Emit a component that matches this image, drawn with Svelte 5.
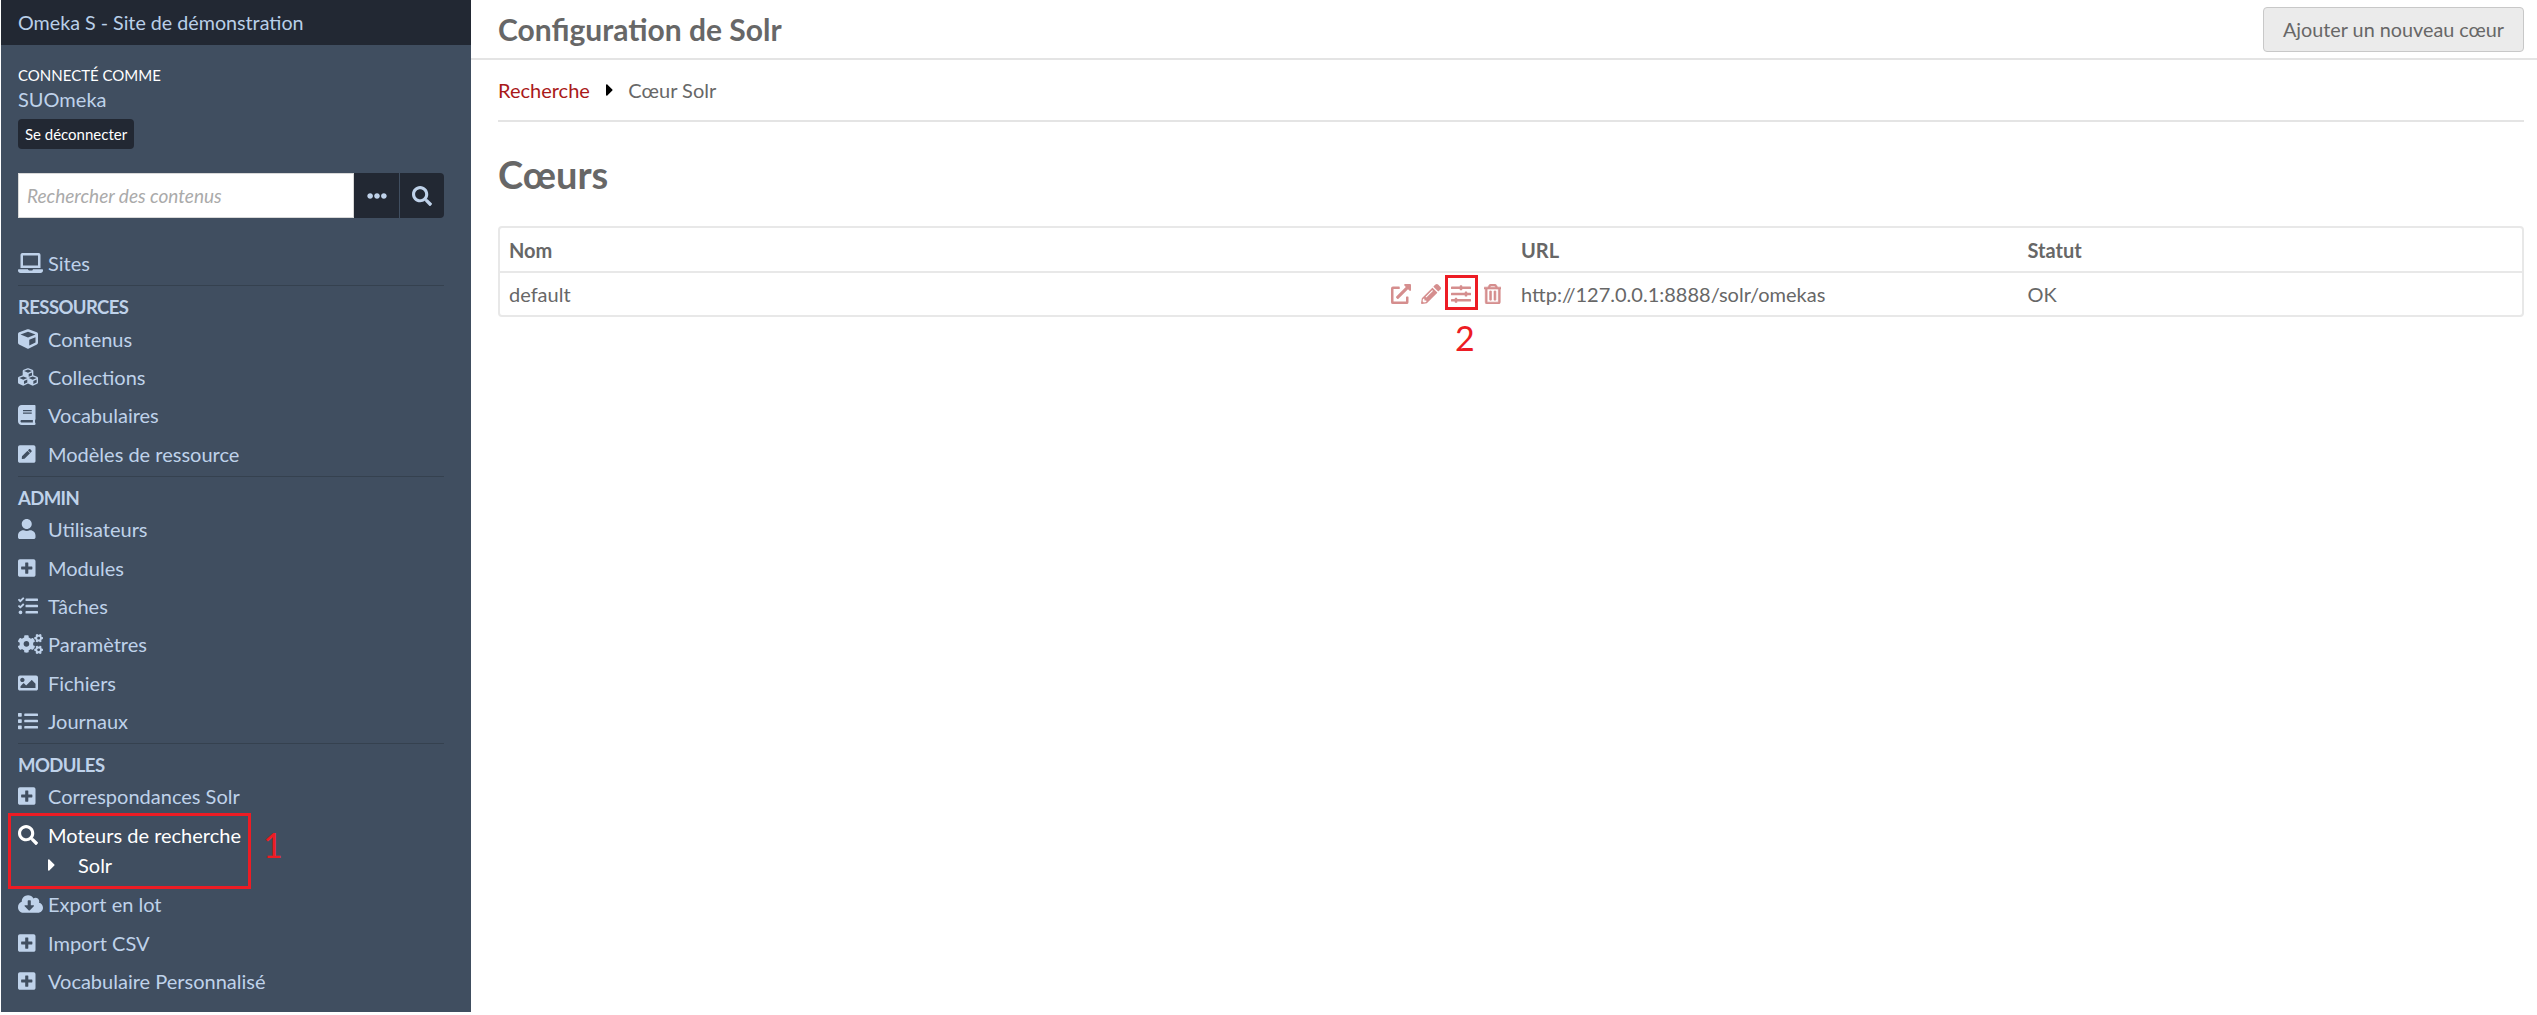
<script lang="ts">
  // icon paths, viewBox width / path
  const icons = {
    laptop: [640, 'M624 416H381.54c-.74 19.81-14.71 32-32.74 32H288c-18.69 0-33.02-17.47-32.77-32H16c-8.8 0-16 7.2-16 16v16c0 35.2 28.8 64 64 64h512c35.2 0 64-28.8 64-64v-16c0-8.8-7.2-16-16-16zM576 48c0-26.4-21.6-48-48-48H112C85.6 0 64 21.6 64 48v336h512V48zm-64 272H128V64h384v256z'],
    cube: [512, 'M239.1 6.3l-208 78c-18.7 7-31.1 25-31.1 45v225.1c0 18.2 10.3 34.8 26.5 42.9l208 104c13.5 6.8 29.4 6.8 42.9 0l208-104c16.3-8.1 26.5-24.8 26.5-42.9V129.3c0-20-12.4-37.9-31.1-44.9l-208-78C262 2.2 250 2.2 239.1 6.3zM256 68.4l192 72v1.1l-192 78-192-78v-1.1l192-72zm32 356V275.5l160-65v133.9l-160 80z'],
    cubes: [576, 'M488.6 250.2L392 214V105.5c0-15-9.3-28.4-23.4-33.7l-100-37.5c-8.1-3.1-17.1-3.1-25.3 0l-100 37.5c-14.1 5.3-23.4 18.7-23.4 33.7V214l-96.6 36.2C9.3 255.5 0 268.9 0 283.9V394c0 13.6 7.7 26.1 19.9 32.2l100 50c10.1 5.1 22.1 5.1 32.2 0l103.9-52 103.9 52c10.1 5.1 22.1 5.1 32.2 0l100-50c12.2-6.1 19.9-18.6 19.9-32.2V283.9c0-15-9.3-28.4-23.4-33.7zM358 214.8l-85 31.9v-68.2l85-37v73.3zM154 104.1l102-38.2 102 38.2v.6l-102 41.4-102-41.4v-.6zm84 291.1l-85 42.5v-79.1l85-38.8v75.4zm0-112l-102 41.4-102-41.4v-.6l102-38.2 102 38.2v.6zm240 112l-85 42.5v-79.1l85-38.8v75.4zm0-112l-102 41.4-102-41.4v-.6l102-38.2 102 38.2v.6z'],
    book: [448, 'M448 360V24c0-13.3-10.7-24-24-24H96C43 0 0 43 0 96v320c0 53 43 96 96 96h328c13.3 0 24-10.7 24-24v-16c0-7.5-3.5-14.3-8.9-18.7-4.2-15.4-4.2-59.3 0-74.7 5.4-4.3 8.9-11.1 8.9-18.6zM128 134c0-3.3 2.7-6 6-6h212c3.3 0 6 2.7 6 6v20c0 3.3-2.7 6-6 6H134c-3.3 0-6-2.7-6-6v-20zm0 64c0-3.3 2.7-6 6-6h212c3.3 0 6 2.7 6 6v20c0 3.3-2.7 6-6 6H134c-3.3 0-6-2.7-6-6v-20zm253.4 250H96c-17.7 0-32-14.3-32-32 0-17.6 14.4-32 32-32h285.4c-1.9 17.1-1.9 46.9 0 64z'],
    penSquare: [448, 'M400 480H48c-26.5 0-48-21.5-48-48V80c0-26.5 21.5-48 48-48h352c26.5 0 48 21.5 48 48v352c0 26.5-21.5 48-48 48zM238.1 177.9L102.4 313.6l-6.3 57.1c-.8 7.6 5.6 14.1 13.3 13.3l57.1-6.3L302.2 242c2.3-2.3 2.3-6.1 0-8.5L246.7 178c-2.5-2.4-6.3-2.4-8.6-.1zM345 165.1L314.9 135c-9.4-9.4-24.6-9.4-33.9 0l-23.1 23.1c-2.3 2.3-2.3 6.1 0 8.5l55.5 55.5c2.3 2.3 6.1 2.3 8.5 0L345 199c9.3-9.3 9.3-24.5 0-33.9z'],
    user: [448, 'M224 256c70.7 0 128-57.3 128-128S294.7 0 224 0 96 57.3 96 128s57.3 128 128 128zm89.6 32h-16.7c-22.2 10.2-46.9 16-72.9 16s-50.6-5.8-72.9-16h-16.7C60.2 288 0 348.2 0 422.4V464c0 26.5 21.5 48 48 48h352c26.5 0 48-21.5 48-48v-41.6c0-74.2-60.2-134.4-134.4-134.4z'],
    plus: [448, 'M400 32H48C21.5 32 0 53.5 0 80v352c0 26.5 21.5 48 48 48h352c26.5 0 48-21.5 48-48V80c0-26.5-21.5-48-48-48zm-32 252c0 6.6-5.4 12-12 12h-92v92c0 6.6-5.4 12-12 12h-56c-6.6 0-12-5.4-12-12v-92H92c-6.6 0-12-5.4-12-12v-56c0-6.6 5.4-12 12-12h92v-92c0-6.6 5.4-12 12-12h56c6.6 0 12 5.4 12 12v92h92c6.6 0 12 5.4 12 12v56z'],
    tasks: [512, 'M139.61 35.5a12 12 0 0 0-17 0L58.93 98.81l-22.7-22.12a12 12 0 0 0-17 0L3.53 92.41a12 12 0 0 0 0 17l47.59 47.4a12.78 12.78 0 0 0 17.61 0l15.59-15.62L156.52 69a12.09 12.09 0 0 0 .09-17zm0 159.19a12 12 0 0 0-17 0l-63.68 63.72-22.7-22.1a12 12 0 0 0-17 0L3.53 252a12 12 0 0 0 0 17L51 316.5a12.77 12.77 0 0 0 17.6 0l15.7-15.69 72.2-72.22a12 12 0 0 0 .09-16.9zM64 368c-26.49 0-48.59 21.5-48.59 48S37.53 464 64 464a48 48 0 0 0 0-96zm432 16H208a16 16 0 0 0-16 16v32a16 16 0 0 0 16 16h288a16 16 0 0 0 16-16v-32a16 16 0 0 0-16-16zm0-320H208a16 16 0 0 0-16 16v32a16 16 0 0 0 16 16h288a16 16 0 0 0 16-16V80a16 16 0 0 0-16-16zm0 160H208a16 16 0 0 0-16 16v32a16 16 0 0 0 16 16h288a16 16 0 0 0 16-16v-32a16 16 0 0 0-16-16z'],
    cogs: [640, 'M512.1 191l-8.2 14.3c-3 5.3-9.4 7.5-15.1 5.4-11.8-4.4-22.6-10.7-32.1-18.6-4.6-3.8-5.8-10.5-2.8-15.7l8.2-14.3c-6.9-8-12.3-17.3-15.9-27.4h-16.5c-6 0-11.2-4.3-12.2-10.3-2-12-2.1-24.6 0-37.1 1-6 6.2-10.4 12.2-10.4h16.5c3.6-10.1 9-19.4 15.9-27.4l-8.2-14.3c-3-5.2-1.9-11.9 2.8-15.7 9.5-7.9 20.4-14.2 32.1-18.6 5.7-2.1 12.1.1 15.1 5.4l8.2 14.3c10.5-1.9 21.2-1.9 31.7 0L552 6.3c3-5.3 9.4-7.5 15.1-5.4 11.8 4.4 22.6 10.7 32.1 18.6 4.6 3.8 5.8 10.5 2.8 15.7l-8.2 14.3c6.9 8 12.3 17.3 15.9 27.4h16.5c6 0 11.2 4.3 12.2 10.3 2 12 2.1 24.6 0 37.1-1 6-6.2 10.4-12.2 10.4h-16.5c-3.6 10.1-9 19.4-15.9 27.4l8.2 14.3c3 5.2 1.9 11.9-2.8 15.7-9.5 7.9-20.4 14.2-32.1 18.6-5.7 2.1-12.1-.1-15.1-5.4l-8.2-14.3c-10.4 1.9-21.2 1.9-31.7 0zm-10.5-58.8c38.5 29.6 82.4-14.3 52.8-52.8-38.5-29.7-82.4 14.3-52.8 52.8zM386.3 286.1l33.7 16.8c10.1 5.8 14.5 18.1 10.5 29.1-8.9 24.2-26.4 46.4-42.6 65.8-7.4 8.9-20.2 11.1-30.3 5.3l-29.1-16.8c-16 13.7-34.6 24.6-54.9 31.7v33.6c0 11.6-8.3 21.6-19.7 23.6-24.6 4.2-50.4 4.4-75.9 0-11.5-2-20-11.9-20-23.6V418c-20.3-7.2-38.9-18-54.9-31.7L74 403c-10 5.8-22.9 3.6-30.3-5.3-16.2-19.4-33.3-41.6-42.2-65.7-4-10.9.4-23.2 10.5-29.1l33.3-16.8c-3.9-20.9-3.9-42.4 0-63.4L12 205.8c-10.1-5.8-14.6-18.1-10.5-29 8.9-24.2 26-46.4 42.2-65.8 7.4-8.9 20.2-11.1 30.3-5.3l29.1 16.8c16-13.7 34.6-24.6 54.9-31.7V57.1c0-11.5 8.2-21.5 19.6-23.5 24.6-4.2 50.5-4.4 76-.1 11.5 2 20 11.9 20 23.6v33.6c20.3 7.2 38.9 18 54.9 31.7l29.1-16.8c10-5.8 22.9-3.6 30.3 5.3 16.2 19.4 33.2 41.6 42.1 65.8 4 10.9.1 23.2-10 29.1l-33.7 16.8c3.9 21 3.9 42.5 0 63.5zm-117.6 21.1c59.2-77-28.7-164.9-105.7-105.7-59.2 77 28.7 164.9 105.7 105.7zm243.4 182.7l-8.2 14.3c-3 5.3-9.4 7.5-15.1 5.4-11.8-4.4-22.6-10.7-32.1-18.6-4.6-3.8-5.8-10.5-2.8-15.7l8.2-14.3c-6.9-8-12.3-17.3-15.9-27.4h-16.5c-6 0-11.2-4.3-12.2-10.3-2-12-2.1-24.6 0-37.1 1-6 6.2-10.4 12.2-10.4h16.5c3.6-10.1 9-19.4 15.9-27.4l-8.2-14.3c-3-5.2-1.9-11.9 2.8-15.7 9.5-7.9 20.4-14.2 32.1-18.6 5.7-2.1 12.1.1 15.1 5.4l8.2 14.3c10.5-1.9 21.2-1.9 31.7 0l8.2-14.3c3-5.3 9.4-7.5 15.1-5.4 11.8 4.4 22.6 10.7 32.1 18.6 4.6 3.8 5.8 10.5 2.8 15.7l-8.2 14.3c6.9 8 12.3 17.3 15.9 27.4h16.5c6 0 11.2 4.3 12.2 10.3 2 12 2.1 24.6 0 37.1-1 6-6.2 10.4-12.2 10.4h-16.5c-3.6 10.1-9 19.4-15.9 27.4l8.2 14.3c3 5.2 1.9 11.9-2.8 15.7-9.5 7.9-20.4 14.2-32.1 18.6-5.7 2.1-12.1-.1-15.1-5.4l-8.2-14.3c-10.4 1.9-21.2 1.9-31.7 0zM501.6 431c38.5 29.6 82.4-14.3 52.8-52.8-38.5-29.6-82.4 14.3-52.8 52.8z'],
    image: [512, 'M464 448H48c-26.51 0-48-21.49-48-48V112c0-26.51 21.49-48 48-48h416c26.51 0 48 21.49 48 48v288c0 26.51-21.49 48-48 48zM112 120c-30.928 0-56 25.072-56 56s25.072 56 56 56 56-25.072 56-56-25.072-56-56-56zM64 384h384V272l-87.515-87.515c-4.686-4.686-12.284-4.686-16.971 0L208 320l-55.515-55.515c-4.686-4.686-12.284-4.686-16.971 0L64 336v48z'],
    list: [512, 'M80 368H16a16 16 0 0 0-16 16v64a16 16 0 0 0 16 16h64a16 16 0 0 0 16-16v-64a16 16 0 0 0-16-16zm0-320H16A16 16 0 0 0 0 64v64a16 16 0 0 0 16 16h64a16 16 0 0 0 16-16V64a16 16 0 0 0-16-16zm0 160H16a16 16 0 0 0-16 16v64a16 16 0 0 0 16 16h64a16 16 0 0 0 16-16v-64a16 16 0 0 0-16-16zm416 176H176a16 16 0 0 0-16 16v32a16 16 0 0 0 16 16h320a16 16 0 0 0 16-16v-32a16 16 0 0 0-16-16zm0-320H176a16 16 0 0 0-16 16v32a16 16 0 0 0 16 16h320a16 16 0 0 0 16-16V80a16 16 0 0 0-16-16zm0 160H176a16 16 0 0 0-16 16v32a16 16 0 0 0 16 16h320a16 16 0 0 0 16-16v-32a16 16 0 0 0-16-16z'],
    search: [512, 'M505 442.7L405.3 343c-4.5-4.5-10.6-7-17-7H372c27.6-35.3 44-79.7 44-128C416 93.1 322.9 0 208 0S0 93.1 0 208s93.1 208 208 208c48.3 0 92.7-16.4 128-44v16.3c0 6.4 2.5 12.5 7 17l99.7 99.7c9.4 9.4 24.6 9.4 33.9 0l28.3-28.3c9.4-9.4 9.4-24.6.1-34zM208 336c-70.7 0-128-57.2-128-128 0-70.7 57.2-128 128-128 70.7 0 128 57.2 128 128 0 70.7-57.2 128-128 128z'],
    cloud: [640, 'M537.6 226.6c4.1-10.7 6.4-22.4 6.4-34.6 0-53-43-96-96-96-19.7 0-38.1 6-53.3 16.2C367 64.2 315.3 32 256 32c-88.4 0-160 71.6-160 160 0 2.7.1 5.4.2 8.1C40.2 219.8 0 273.2 0 336c0 79.5 64.5 144 144 144h368c70.7 0 128-57.3 128-128 0-61.9-44-113.6-102.4-125.4zm-132.9 88.7L299.3 420.7c-6.2 6.2-16.4 6.2-22.6 0L171.3 315.3c-10.1-10.1-2.9-27.3 11.3-27.3H248V176c0-8.8 7.2-16 16-16h48c8.8 0 16 7.2 16 16v112h65.4c14.2 0 21.4 17.2 11.3 27.3z'],
    dots: [512, 'M328 256c0 39.8-32.2 72-72 72s-72-32.2-72-72 32.2-72 72-72 72 32.2 72 72zm104-72c-39.8 0-72 32.2-72 72s32.2 72 72 72 72-32.2 72-72-32.2-72-72-72zm-352 0c-39.8 0-72 32.2-72 72s32.2 72 72 72 72-32.2 72-72-32.2-72-72-72z'],
    external: [512, 'M432,320H400a16,16,0,0,0-16,16V448H64V128H208a16,16,0,0,0,16-16V80a16,16,0,0,0-16-16H48A48,48,0,0,0,0,112V464a48,48,0,0,0,48,48H400a48,48,0,0,0,48-48V336A16,16,0,0,0,432,320ZM488,0h-128c-21.37,0-32.05,25.91-17,41l35.73,35.73L135,320.37a24,24,0,0,0,0,34L157.67,377a24,24,0,0,0,34,0L435.28,133.32,471,169c15,15,41,4.5,41-17V24A24,24,0,0,0,488,0Z'],
    pencil: [512, 'M497.9 142.1l-46.1 46.1c-4.7 4.7-12.3 4.7-17 0l-111-111c-4.7-4.7-4.7-12.3 0-17l46.1-46.1c18.7-18.7 49.1-18.7 67.9 0l60.1 60.1c18.8 18.7 18.8 49.1 0 67.9zM284.2 99.8L21.6 362.4.4 483.9c-2.9 16.4 11.4 30.6 27.8 27.8l121.5-21.3 262.6-262.6c4.7-4.7 4.7-12.3 0-17l-111-111c-4.8-4.7-12.4-4.7-17.1 0zM124.1 339.9c-5.5-5.5-5.5-14.3 0-19.8l154-154c5.5-5.5 14.3-5.5 19.8 0s5.5 14.3 0 19.8l-154 154c-5.5 5.5-14.3 5.5-19.8 0zM88 424h48v36.3l-64.5 11.3-31.1-31.1L51.7 376H88v48z'],
    sliders: [512, 'M496 384H160v-16c0-8.8-7.2-16-16-16h-32c-8.8 0-16 7.2-16 16v16H16c-8.8 0-16 7.2-16 16v32c0 8.8 7.2 16 16 16h80v16c0 8.8 7.2 16 16 16h32c8.8 0 16-7.2 16-16v-16h336c8.8 0 16-7.2 16-16v-32c0-8.8-7.2-16-16-16zm0-160h-80v-16c0-8.8-7.2-16-16-16h-32c-8.8 0-16 7.2-16 16v16H16c-8.8 0-16 7.2-16 16v32c0 8.8 7.2 16 16 16h336v16c0 8.8 7.2 16 16 16h32c8.8 0 16-7.2 16-16v-16h80c8.8 0 16-7.2 16-16v-32c0-8.8-7.2-16-16-16zm0-160H288V48c0-8.8-7.2-16-16-16h-32c-8.8 0-16 7.2-16 16v16H16C7.2 64 0 71.2 0 80v32c0 8.8 7.2 16 16 16h208v16c0 8.8 7.2 16 16 16h32c8.8 0 16-7.2 16-16v-16h208c8.8 0 16-7.2 16-16V80c0-8.8-7.2-16-16-16z'],
    trash: [448, 'M268 416h24a12 12 0 0 0 12-12V188a12 12 0 0 0-12-12h-24a12 12 0 0 0-12 12v216a12 12 0 0 0 12 12zM432 80h-82.41l-34-56.7A48 48 0 0 0 274.41 0H173.59a48 48 0 0 0-41.16 23.3L98.41 80H16A16 16 0 0 0 0 96v16a16 16 0 0 0 16 16h16v336a48 48 0 0 0 48 48h288a48 48 0 0 0 48-48V128h16a16 16 0 0 0 16-16V96a16 16 0 0 0-16-16zM171.84 50.91A6 6 0 0 1 177 48h94a6 6 0 0 1 5.15 2.91L293.61 80H154.39zM368 464H80V128h288zm-212-48h24a12 12 0 0 0 12-12V188a12 12 0 0 0-12-12h-24a12 12 0 0 0-12 12v216a12 12 0 0 0 12 12z'],
    caret: [192, 'M0 384.662V127.338c0-17.818 21.543-26.741 34.142-14.142l128.662 128.662c7.81 7.81 7.81 20.474 0 28.284L34.142 398.804C21.543 411.404 0 402.48 0 384.662z']
  };

  const sections = [
    { title: 'Ressources', items: [['cube', 'Contenus'], ['cubes', 'Collections'], ['book', 'Vocabulaires'], ['penSquare', 'Modèles de ressource']] },
    { title: 'Admin', items: [['user', 'Utilisateurs'], ['plus', 'Modules'], ['tasks', 'Tâches'], ['cogs', 'Paramètres'], ['image', 'Fichiers'], ['list', 'Journaux']] }
  ];
</script>

{#snippet icon(name, cls = 'ico')}
  <svg class={cls} viewBox="0 0 {icons[name][0]} 512" width={icons[name][0] / 512 * 20} height="20" fill="currentColor"><path d={icons[name][1]} /></svg>
{/snippet}

{#snippet row(name, label)}
  <a class="nav-row" href="#top">
    <span class="nav-icon">{@render icon(name)}</span>
    <span>{label}</span>
  </a>
{/snippet}

<div class="page">
  <aside class="sidebar">
    <div class="brand">Omeka S - Site de démonstration</div>

    <div class="side-body">
      <div class="user-block">
        <div class="logged">Connecté comme</div>
        <div class="username">SUOmeka</div>
        <button class="logout">Se déconnecter</button>
      </div>

      <div class="search">
        <input type="text" placeholder="Rechercher des contenus" />
        <button class="search-btn">{@render icon('dots')}</button>
        <button class="search-btn last">{@render icon('search')}</button>
      </div>

      <nav>
        <div class="group first">
          {@render row('laptop', 'Sites')}
        </div>
        {#each sections as s}
          <div class="group">
            <h4>{s.title}</h4>
            {#each s.items as it}
              {@render row(it[0], it[1])}
            {/each}
          </div>
        {/each}
        <div class="group last-group">
          <h4>Modules</h4>
          {@render row('plus', 'Correspondances Solr')}
          <a class="nav-row active" href="#top">
            <span class="nav-icon">{@render icon('search')}</span>
            <span>Moteurs de recherche</span>
          </a>
          <div class="sub-row">
            <span class="sub-caret">{@render icon('caret')}</span>
            <span>Solr</span>
          </div>
          {@render row('cloud', 'Export en lot')}
          {@render row('plus', 'Import CSV')}
          {@render row('plus', 'Vocabulaire Personnalisé')}
        </div>
      </nav>
    </div>
  </aside>

  <main class="content">
    <header class="top">
      <h1>Configuration de Solr</h1>
      <button class="add">Ajouter un nouveau cœur</button>
    </header>

    <div class="inner">
      <div class="crumbs">
        <a href="#top">Recherche</a>
        <span class="crumb-caret">{@render icon('caret')}</span>
        <span>Cœur Solr</span>
      </div>

      <h2>Cœurs</h2>

      <div class="table">
        <div class="tr head">
          <div class="td">Nom</div>
          <div class="td">URL</div>
          <div class="td status">Statut</div>
        </div>
        <div class="tr">
          <div class="td name">
            <span>default</span>
            <span class="actions">
              {@render icon('external')}
              {@render icon('pencil')}
              {@render icon('sliders')}
              {@render icon('trash', 'ico trash')}
            </span>
          </div>
          <div class="td">http://127.0.0.1:8888/solr/omekas</div>
          <div class="td status">OK</div>
        </div>
      </div>
    </div>
  </main>

  <!-- annotations drawn over the screenshot -->
  <div class="mark box-one"></div>
  <div class="mark-num num-one">1</div>
  <div class="mark box-two"></div>
  <div class="mark-num num-two">2</div>
</div>

<style>
  :global(body) {
    margin: 0;
    background: #fff;
  }

  .page {
    position: relative;
    display: flex;
    width: 2537px;
    height: 1015px;
    overflow: hidden;
    font-family: Lato, "Liberation Sans", sans-serif;
    font-size: 20px;
    color: #676767;
  }

  .sidebar {
    width: 470px;
    height: 1012px;
    margin-left: 1px;
    flex: none;
    background: #404e60;
    color: #bfd2ea;
  }

  .brand {
    height: 45px;
    padding-left: 17px;
    line-height: 45px;
    font-size: 19.7px;
    background: #222833;
    color: #b9cfe8;
  }

  .side-body {
    padding: 0 27px 0 17px;
  }

  .user-block {
    padding-top: 19px;
  }

  .logged {
    height: 22px;
    line-height: 22px;
    font-size: 15px;
    text-transform: uppercase;
    color: #fff;
  }

  .username {
    height: 26px;
    line-height: 26px;
    margin-bottom: 7px;
  }

  .logout {
    display: block;
    height: 30px;
    width: 116px;
    padding: 0;
    border: 0;
    border-radius: 4px;
    font: inherit;
    font-size: 15px;
    background: #222833;
    color: #fff;
  }

  .search {
    display: flex;
    height: 45px;
    margin-top: 24px;
    margin-bottom: 26px;
  }

  .search input {
    flex: 1;
    min-width: 0;
    box-sizing: border-box;
    padding: 0 8px;
    border: 1px solid #d8d8d8;
    border-radius: 0;
    font: inherit;
    font-size: 19px;
    background: #fff;
  }

  .search input::placeholder {
    font-style: italic;
    color: #aaa;
  }

  .search-btn {
    display: flex;
    align-items: center;
    justify-content: center;
    width: 45px;
    padding: 0;
    border: 0;
    border-left: 1px solid #404e60;
    background: #222833;
    color: #bfd2ea;
  }

  .search-btn:first-of-type {
    border-left: 0;
  }

  .search-btn.last {
    border-radius: 0 4px 4px 0;
  }

  .ico {
    display: block;
  }

  .group {
    padding-bottom: 3px;
    border-bottom: 1px solid #35414f;
  }

  .group.last-group {
    border-bottom: 0;
  }

  h4 {
    height: 26px;
    margin: 8px 0 -1px;
    line-height: 26px;
    font-size: 18.5px;
    font-weight: 700;
    letter-spacing: -0.6px;
    text-transform: uppercase;
  }

  .nav-row {
    display: flex;
    align-items: center;
    height: 38.4px;
    color: inherit;
    text-decoration: none;
  }

  .nav-icon {
    flex: none;
    width: 30px;
  }

  .active {
    color: #fff;
  }

  .sub-row {
    display: flex;
    align-items: center;
    height: 22px;
    padding: 0 0 9px 30px;
    color: #fff;
  }

  .sub-caret {
    flex: none;
    width: 30px;
  }

  .content {
    flex: 1;
    min-width: 0;
  }

  .top {
    display: flex;
    align-items: center;
    justify-content: space-between;
    box-sizing: border-box;
    height: 60px;
    padding: 0 13px 0 27px;
    border-bottom: 2px solid #e4e4e4;
  }

  h1 {
    margin: 0;
    font-size: 30px;
    font-weight: 700;
  }

  .add {
    box-sizing: border-box;
    width: 261px;
    height: 45px;
    padding: 0;
    border: 1px solid #c8c8c8;
    border-radius: 4px;
    font: inherit;
    font-size: 19.8px;
    background: #ebebeb;
    color: #676767;
  }

  .inner {
    padding: 0 13px 0 27px;
  }

  .crumbs {
    display: flex;
    align-items: center;
    height: 60px;
    border-bottom: 2px solid #e4e4e4;
  }

  .crumbs a {
    color: #a91919;
    text-decoration: none;
  }

  .crumb-caret {
    margin: 0 15px 0 16px;
    color: #000;
  }

  h2 {
    margin: 0;
    padding: 28px 0 28px;
    line-height: 48px;
    font-size: 38px;
    font-weight: 700;
  }

  .table {
    border: 2px solid #e8e8e8;
    border-radius: 4px;
  }

  .tr {
    display: grid;
    grid-template-columns: 2fr 1fr 1fr;
    height: 42px;
  }

  .tr.head {
    height: 43px;
    border-bottom: 2px solid #e8e8e8;
    font-weight: 700;
  }

  .td {
    display: flex;
    align-items: center;
    padding: 0 10px;
  }

  .td:first-child {
    padding-left: 9px;
  }

  .td.status {
    padding-left: 11px;
  }

  .name {
    justify-content: space-between;
  }

  .actions {
    display: flex;
    gap: 10px;
    color: #d58e8e;
  }

  .actions :global(.trash) {
    margin-left: 3px;
    stroke: currentColor;
    stroke-width: 16px;
  }

  .mark {
    position: absolute;
    box-sizing: border-box;
    border: 3px solid #ed1c24;
  }

  .box-one {
    left: 8px;
    top: 813px;
    width: 243px;
    height: 76px;
  }

  .box-two {
    left: 1445px;
    top: 275px;
    width: 33px;
    height: 35px;
  }

  .mark-num {
    position: absolute;
    font-size: 34px;
    line-height: 34px;
    color: #ed1c24;
  }

  .num-one {
    left: 263px;
    top: 828px;
  }

  .num-two {
    left: 1455px;
    top: 321px;
  }
</style>
